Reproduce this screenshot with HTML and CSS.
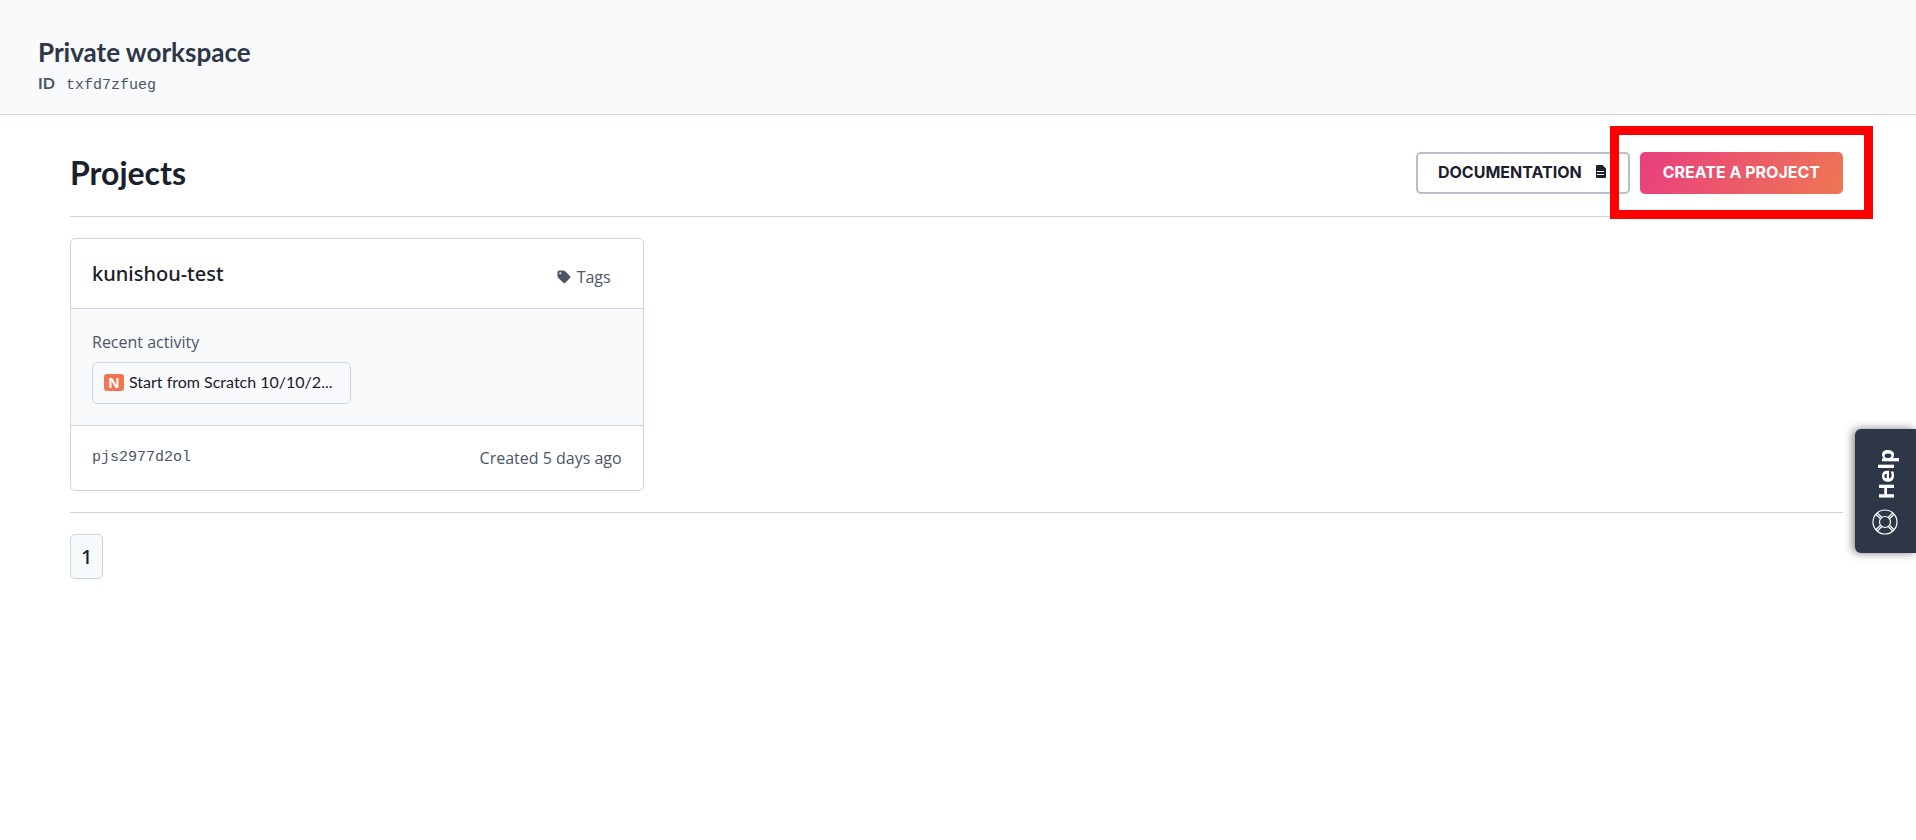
FILE: index.html
```html
<!DOCTYPE html>
<html lang="en">
<head>
<meta charset="utf-8">
<meta name="viewport" content="width=device-width, initial-scale=1">
<title>Private workspace</title>
<link rel="stylesheet" href="styles.css">
</head>
<body>
<header class="workspace">
  <h1 class="workspace-name">Private workspace</h1>
  <p class="workspace-id"><span class="workspace-label">ID</span><code class="code">txfd7zfueg</code></p>
</header>
<main class="content">
  <div class="toolbar">
    <h2 class="page-title">Projects</h2>
    <div class="actions">
      <a class="button button-outline" href="#">DOCUMENTATION
        <svg class="doc-icon" viewBox="0 0 10 13" aria-hidden="true"><path fill="#1a202c" d="M1 0h5.500L10 3.500V12a1 1 0 0 1-1 1H1a1 1 0 0 1-1-1V1a1 1 0 0 1 1-1z"/><path stroke="#fff" d="M1 6.500h7M1 9.500h7"/></svg>
      </a>
      <div class="highlight">
        <button class="button button-primary" type="button">CREATE A PROJECT</button>
      </div>
    </div>
  </div>
  <section class="projects">
    <article class="card">
      <div class="card-head">
        <h3 class="card-title">kunishou-test</h3>
        <button class="tags" type="button">
          <svg class="tag-icon" viewBox="0 0 14 14" aria-hidden="true"><path fill="#4a5568" fill-rule="evenodd" d="M2 .5h4.500a2 2 0 0 1 1.400.6l5.300 5.200a1.100 1.100 0 0 1 0 1.500l-5.100 5.100a1.100 1.100 0 0 1-1.500 0L1.100 7.800A2 2 0 0 1 .5 6.400V2A1.500 1.500 0 0 1 2 .5zM3.300 2.300a1 1 0 1 0 0 2 1 1 0 0 0 0-2z"/></svg>
          Tags
        </button>
      </div>
      <div class="card-activity">
        <p class="activity-label">Recent activity</p>
        <a class="chip" href="#"><span class="chip-badge">N</span><span class="chip-text">Start from Scratch 10/10/2...</span></a>
      </div>
      <div class="card-foot">
        <code class="code">pjs2977d2ol</code>
        <span>Created 5 days ago</span>
      </div>
    </article>
  </section>
  <nav class="pager" aria-label="Pages"><button class="page" type="button">1</button></nav>
</main>
<button class="help" type="button">
  <span>Help</span>
  <svg class="help-icon" viewBox="0 0 26 26" aria-hidden="true" fill="none" stroke="#fff" stroke-width="1.200"><circle cx="13" cy="13" r="12"/><circle cx="13" cy="13" r="5.500"/><path d="M3.800 5.300l4.700 4.500M5.300 3.800l4.500 4.700M20.700 3.800l-4.500 4.700M22.200 5.300l-4.700 4.500M3.800 20.700l4.700-4.500M5.300 22.200l4.500-4.700M22.200 20.700l-4.700-4.500M20.700 22.200l-4.500-4.700"/></svg>
</button>
</body>
</html>
```
FILE: styles.css
```css
* {
  box-sizing: border-box;
}

body {
  margin: 0;
  background: #fff;
  color: #1a202c;
  font: 16px/24px "Open Sans", sans-serif;
}

h1, h2, h3, p {
  margin: 0;
}

button {
  font: inherit;
  cursor: pointer;
}

.workspace {
  padding: 36px 38px 16px;
  background: #f9fafc;
  border-bottom: 1px solid #cbd5e0;
}

.workspace-name {
  color: #2d3748;
  font: 700 26px/32px Lato, sans-serif;
}

.workspace-id {
  display: flex;
  align-items: baseline;
  gap: 11px;
  padding-top: 3px;
  height: 30px;
  color: #4a5568;
}

.workspace-label {
  font: 700 16px/24px Lato, sans-serif;
}

.code {
  color: #4a5568;
  font: 15px/24px "Liberation Mono", monospace;
}

.content {
  padding: 0 73px 0 70px;
}

.toolbar {
  display: flex;
  align-items: center;
  justify-content: space-between;
  padding: 37px 0 22px;
  border-bottom: 1px solid #cbd5e0;
}

.page-title {
  font: 700 32px/40px Lato, sans-serif;
}

.actions {
  display: flex;
  gap: 10px;
}

.button {
  display: flex;
  align-items: center;
  height: 42px;
  padding: 0 20px 3px;
  border: 2px solid transparent;
  border-radius: 5px;
  font: 700 16px/24px Inter, sans-serif;
  text-decoration: none;
}

.button-outline {
  gap: 14px;
  padding-right: 22px;
  border-color: #b9bdc9;
  color: #1a202c;
}

.doc-icon {
  width: 10px;
  height: 13px;
}

.button-primary {
  border: 0;
  padding: 0 23px 3px;
  background: linear-gradient(120deg, #e83e80, #ee7752);
  color: #fff;
}

.highlight {
  position: relative;
}

.highlight::after {
  content: "";
  position: absolute;
  inset: -26px -30px -25px;
  border: 9px solid #f00;
  pointer-events: none;
}

.projects {
  display: grid;
  grid-template-columns: repeat(3, 1fr);
  gap: 26px;
  padding: 21px 0;
  border-bottom: 1px solid #cbd5e0;
}

.card {
  border: 1px solid #cbd5e0;
  border-radius: 5px;
  color: #4a5568;
}

.card-head {
  display: flex;
  align-items: center;
  justify-content: space-between;
  height: 69px;
  padding: 0 32px 0 21px;
}

.card-title {
  color: #1a202c;
  font: 500 20px/28px "Noto Sans", sans-serif;
}

.tags {
  display: flex;
  align-items: center;
  gap: 6px;
  padding: 6px 0 0;
  border: 0;
  background: none;
  color: #4a5568;
}

.tag-icon {
  width: 14px;
  height: 14px;
}

.card-activity {
  padding: 21px;
  background: #f9fafc;
  border: 1px solid #cbd5e0;
  border-width: 1px 0;
}

.activity-label {
  padding-bottom: 8px;
}

.chip {
  display: inline-flex;
  align-items: center;
  gap: 5px;
  height: 42px;
  padding: 0 18px 2px 11px;
  border: 1px solid #cbd5e0;
  border-radius: 5px;
  color: #1a202c;
  font: 16px/24px Lato, sans-serif;
  text-decoration: none;
  vertical-align: top;
}

.chip-badge {
  width: 20px;
  border-radius: 3px;
  background: #ee7752;
  color: #fff;
  font: 700 14px/17px "Open Sans", sans-serif;
  text-align: center;
}

.card-foot {
  display: flex;
  align-items: center;
  justify-content: space-between;
  height: 64px;
  padding: 0 21px;
}

.pager {
  padding-top: 21px;
}

.page {
  height: 45px;
  padding: 0 10px;
  border: 1px solid #cbd5e0;
  border-radius: 5px;
  background: #f7fafc;
  color: #1a202c;
  font: 500 20px/28px "Noto Sans", sans-serif;
}

.help {
  position: fixed;
  top: 429px;
  right: 0;
  display: flex;
  align-items: center;
  gap: 10px;
  padding: 20px 18px 18px 17px;
  border: 0;
  border-radius: 6px 0 0 6px;
  background: #2d3748;
  box-shadow: -2px 0 8px rgba(0, 0, 0, 0.5);
  color: #fff;
  flex-direction: column;
}

.help span {
  writing-mode: vertical-rl;
  rotate: 180deg;
  font: 700 22px/26px "Open Sans", sans-serif;
}

.help-icon {
  width: 26px;
  height: 26px;
}
```
